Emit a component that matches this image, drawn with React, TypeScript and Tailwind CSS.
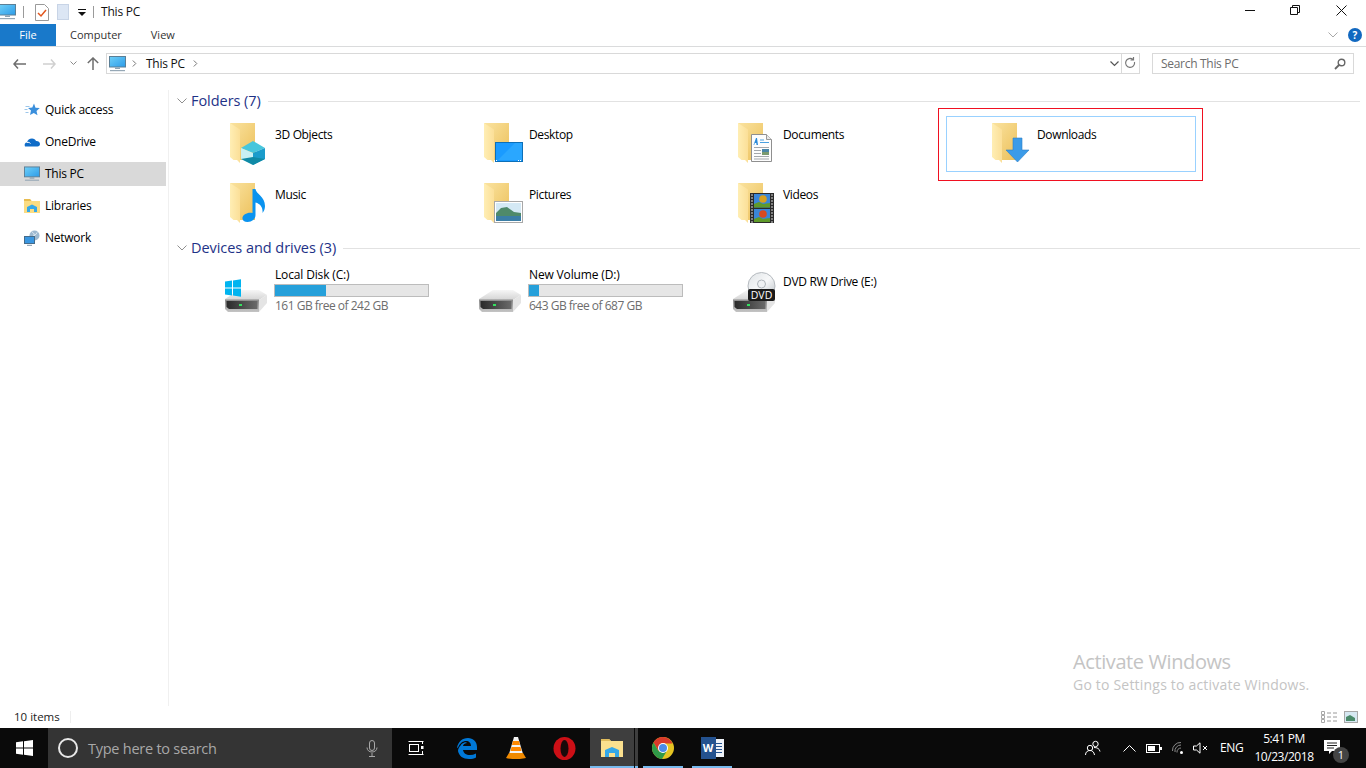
import type { ReactNode } from "react";

const FONT = "font-['Open_Sans','Noto_Sans',sans-serif]";

function Defs() {
  return (
    <svg width="0" height="0" className="absolute">
      <defs>
        <linearGradient id="fold" x1="0" y1="0" x2="1" y2="1">
          <stop offset="0" stopColor="#fae3a0" />
          <stop offset="1" stopColor="#ecc05a" />
        </linearGradient>
        <linearGradient id="flap" x1="0" y1="0" x2="1" y2="0">
          <stop offset="0" stopColor="#ffeeb4" />
          <stop offset="1" stopColor="#fbdf98" />
        </linearGradient>
        <linearGradient id="screen" x1="0" y1="0" x2="1" y2="1">
          <stop offset="0" stopColor="#6fd0f8" />
          <stop offset="1" stopColor="#2c9be8" />
        </linearGradient>
        <linearGradient id="hdd" x1="0" y1="0" x2="0" y2="1">
          <stop offset="0" stopColor="#f6f6f6" />
          <stop offset="1" stopColor="#d4d4d4" />
        </linearGradient>
        <linearGradient id="front" x1="0" y1="0" x2="0" y2="1">
          <stop offset="0" stopColor="#8c8c8c" />
          <stop offset="1" stopColor="#c4c4c4" />
        </linearGradient>
        <linearGradient id="slot" x1="0" y1="0" x2="1" y2="0">
          <stop offset="0" stopColor="#2a2a2a" />
          <stop offset="1" stopColor="#6a6a6a" />
        </linearGradient>
        <linearGradient id="disc" x1="0" y1="0" x2="1" y2="1">
          <stop offset="0" stopColor="#dfe3e6" />
          <stop offset="0.5" stopColor="#f7f8f9" />
          <stop offset="1" stopColor="#b8bec4" />
        </linearGradient>
      </defs>
    </svg>
  );
}

function FolderBase() {
  return (
    <>
      <path d="M3 3h25v37H13z" fill="url(#fold)" />
      <path d="M3 3l10 6.500V43l-3-3H6.500L3 37z" fill="url(#flap)" />
    </>
  );
}

function Tile48({ children }: { children: ReactNode }) {
  return (
    <svg width="48" height="48" viewBox="0 0 48 48" className="shrink-0">
      {children}
    </svg>
  );
}

function ObjectsIcon() {
  return (
    <Tile48>
      <FolderBase />
      <path d="M14 28l12-7 12 7-12 5z" fill="#47c6dc" />
      <path d="M14 28l12 5v12l-12-6z" fill="#c8f0f4" />
      <path d="M38 28l-12 5v12l12-6z" fill="#1a9ccb" />
      <path d="M14 39l12-2 12 2-12 6z" fill="#0f8aa6" />
    </Tile48>
  );
}

function DesktopFolderIcon() {
  return (
    <Tile48>
      <FolderBase />
      <rect x="14.500" y="22.500" width="27" height="19" fill="#1a9bff" stroke="#0c6fb8" />
      <path d="M17 40L34 23h7v17z" fill="#2aa7ff" />
      <rect x="15" y="40" width="1" height="1" fill="#fff" />
      <rect x="37" y="40" width="1" height="1" fill="#fff" />
      <rect x="39" y="40" width="1" height="1" fill="#fff" />
    </Tile48>
  );
}

function DocumentsIcon() {
  return (
    <Tile48>
      <FolderBase />
      <path d="M16.500 14.500h15l5 5v22h-20z" fill="#fdfdfd" stroke="#8f8f8f" />
      <path d="M31.500 14.500v5h5" fill="#e8e8e8" stroke="#9a9a9a" />
      <path d="M18.500 25l2.500-7h1l1 7H21.500l-.2-2h-1.500l-.6 2z" fill="#2a8ad8" />
      <path d="M25 20h4M25 22.500h9" stroke="#4aa0e0" />
      <path d="M19 27.500h15M19 30.500h7M19 33.500h7M19 36.500h15M19 39h15" stroke="#a4a8ac" />
      <rect x="27" y="29" width="7" height="6" fill="#4a86a8" />
      <rect x="27" y="32" width="7" height="3" fill="#7a9a70" />
    </Tile48>
  );
}

function MusicIcon() {
  return (
    <Tile48>
      <FolderBase />
      <path d="M25.500 9h3c.5 5 9.500 7.500 9.500 17 0 3-1 5-2.500 7 .5-5-1.500-9-7-10.500V35c0 4-3.500 7-8 7-3.500 0-5.500-2-5-4.500s4.500-5.500 10-4.500z" fill="#0a93ef" />
    </Tile48>
  );
}

function PicturesIcon() {
  return (
    <Tile48>
      <FolderBase />
      <rect x="13.500" y="21.500" width="28" height="21" fill="#fff" stroke="#a8a8a8" />
      <rect x="15" y="23" width="25" height="18" fill="#d4e9f5" />
      <path d="M15 33l5-5 6-1 7 5 7 1v4H15z" fill="#4f8a6a" />
      <path d="M15 36h25v5H15z" fill="#3b7ea6" />
    </Tile48>
  );
}

function VideosIcon() {
  return (
    <Tile48>
      <FolderBase />
      <rect x="15" y="13" width="24" height="30" fill="#2b2b2b" />
      <rect x="19" y="14" width="16" height="13.500" fill="#3a86d8" />
      <rect x="19" y="29" width="16" height="13" fill="#3a86d8" />
      <path d="M19 24l5-2 4 2 7-1v4.500H19zM19 39l5-2 4 2 7-1v4H19z" fill="#5f9a2a" />
      <circle cx="28" cy="19" r="3.800" fill="#d8a020" />
      <circle cx="28" cy="34" r="3.800" fill="#d84a20" />
      <path d="M16 15h2M16 18h2M16 21h2M16 24h2M16 27h2M16 30h2M16 33h2M16 36h2M16 39h2M16 42h2M36 15h2M36 18h2M36 21h2M36 24h2M36 27h2M36 30h2M36 33h2M36 36h2M36 39h2M36 42h2" stroke="#d8d8d8" />
    </Tile48>
  );
}

function DownloadsIcon() {
  return (
    <Tile48>
      <FolderBase />
      <path d="M24 18h9v12h7L28.500 42 17 30h7z" fill="#3b9be8" stroke="#2b7fc8" strokeWidth=".6" />
    </Tile48>
  );
}

function HddBody() {
  return (
    <>
      <path d="M3 29l14-9h20l8 5-8 5H3z" fill="url(#hdd)" />
      <path d="M3 29.500h34V42H6l-3-3z" fill="url(#front)" />
      <path d="M4.500 31h31v8H7l-2.500-2z" fill="url(#slot)" />
      <path d="M37 30l8-5v8l-8 9z" fill="#e4e4e4" />
      <rect x="17" y="34" width="3" height="2" fill="#35e060" />
    </>
  );
}

function CDriveIcon() {
  return (
    <svg width="48" height="48" viewBox="0 0 48 48" className="shrink-0">
      <HddBody />
      <path d="M3 11.500l7-1v7H3zM11 10.500l8-1.200V17.500h-8zM3 18.500h7v7l-7-1zM11 18.500h8v8.200l-8-1.200z" fill="#00b4f0" />
    </svg>
  );
}

function DDriveIcon() {
  return (
    <svg width="48" height="48" viewBox="0 0 48 48" className="shrink-0">
      <HddBody />
    </svg>
  );
}

function DvdIcon() {
  return (
    <svg width="48" height="48" viewBox="0 0 48 48" className="shrink-0">
      <HddBody />
      <circle cx="31.500" cy="16" r="13.500" fill="url(#disc)" stroke="#b5babf" />
      <circle cx="31.500" cy="14" r="4" fill="#eef0f2" stroke="#aeb4ba" />
      <rect x="18" y="19" width="27" height="12" rx="2" fill="#1a1a1a" />
      <text x="31.500" y="29" textAnchor="middle" fill="#fff" fontSize="10.500" fontFamily="Open Sans, sans-serif">
        DVD
      </text>
    </svg>
  );
}

function PcIcon({ className }: { className?: string }) {
  return (
    <svg width="17" height="16" viewBox="0 0 17 16" className={className}>
      <rect x=".5" y=".5" width="16" height="10.500" fill="url(#screen)" stroke="#5b7f96" />
      <path d="M6 11.500h5v1.500H6z" fill="#8da3b3" />
      <path d="M1 14h15v1.200H1z" fill="#96a8b6" />
    </svg>
  );
}

function Sidebar() {
  const rows: [string, ReactNode][] = [
    [
      "Quick access",
      <svg width="16" height="16" viewBox="0 0 16 16">
        <path d="M10 1.500l1.500 4.200 4.300.4-3.300 2.800 1 4.400-3.700-2.400L6 13l1-4.400L4 6l4.300-.4z" fill="#3a8fdc" />
        <path d="M1.500 4.500h4M.5 7.500h3M1.500 10.500h3" stroke="#9cc6ea" />
      </svg>,
    ],
    [
      "OneDrive",
      <svg width="16" height="16" viewBox="0 0 16 16">
        <path d="M1 12.500c-1-2 0-4 2-4 .5-2.500 2.500-4 5-4 2 0 3.500 1 4 2.500 2-.2 4 1 4 3 0 1.500-1 2.500-2.500 2.500z" fill="#0f6cc8" />
        <path d="M3 8.500c1.500-.5 2.500 0 3.500 1" stroke="#fff" fill="none" />
      </svg>,
    ],
    ["This PC", <PcIcon />],
    [
      "Libraries",
      <svg width="16" height="16" viewBox="0 0 16 16">
        <path d="M0 1h6l1.500 2H16v12H0z" fill="#fbdc82" />
        <path d="M0 1h6l1.500 2H0z" fill="#e8bc50" />
        <path d="M3 9l5-2.500L13 9v5h-3v-3H6v3H3z" fill="#35a8e8" />
      </svg>,
    ],
    [
      "Network",
      <svg width="16" height="16" viewBox="0 0 16 16">
        <circle cx="10.500" cy="5.500" r="5" fill="#9cb8d0" />
        <path d="M8 2c2 1 3 3 1.500 5M13 2.500c-1 2-2 3-3.500 3" stroke="#e8f0f6" fill="none" />
        <rect x=".5" y="6.500" width="10" height="7" fill="#3a96e0" stroke="#456b8a" />
        <path d="M3 15.300h5" stroke="#7f95a8" />
      </svg>,
    ],
  ];
  return (
    <nav className="w-[169px] shrink-0 border-r border-[#f0f0f0] pt-[8px] pb-[2px] flex flex-col gap-[8px]">
      {rows.map(([label, icon]) => (
        <div
          key={label}
          className={`w-[166px] h-[24px] flex items-center pl-[24px] gap-[5px] text-[12px] tracking-[-0.25px] text-black ${
            label === "This PC" ? "bg-[#d9d9d9]" : ""
          }`}
        >
          <span className="w-[16px] h-[16px] flex items-center justify-center">{icon}</span>
          <span>{label}</span>
        </div>
      ))}
    </nav>
  );
}

function SectionHead({ title }: { title: string }) {
  return (
    <div className="h-[22px] flex items-center pl-[8px] pr-[6px]">
      <svg width="10" height="6" viewBox="0 0 10 6" className="shrink-0">
        <path d="M.5.500L5 5l4.500-4.500" fill="none" stroke="#8f8f8f" />
      </svg>
      <span className="ml-[4px] text-[14.500px] text-[#1e3287] tracking-[-0.05px] whitespace-nowrap">{title}</span>
      <div className="ml-[7px] flex-1 h-px bg-[#e2e2e2]" />
    </div>
  );
}

function FolderTile({ name, icon, selected }: { name: string; icon: ReactNode; selected?: boolean }) {
  return (
    <div
      className={`relative w-[250px] h-[56px] border flex pl-[42px] pt-[3px] ${
        selected ? "border-[#99d1ff]" : "border-transparent"
      }`}
    >
      {icon}
      <span className="text-[12px] tracking-[-0.35px] text-black pt-[7px] leading-[16px]">{name}</span>
      {selected && <div className="absolute left-[-9px] top-[-9px] w-[265px] h-[73px] border border-[#f01020]" />}
    </div>
  );
}

function DriveTile({
  name,
  icon,
  used,
  free,
}: {
  name: string;
  icon: ReactNode;
  used?: number;
  free?: string;
}) {
  return (
    <div className="w-[250px] h-[56px] flex pl-[38px] pt-[8px]">
      {icon}
      {free ? (
        <div className="ml-[4px] w-[155px] -mt-[8px] pt-[5px]">
          <div className="pl-px text-[12px] leading-[16px] tracking-[-0.15px] text-black">{name}</div>
          <div className="h-[13px] mt-[1px] border border-[#bcbcbc] bg-[#e6e6e6]">
            <div className="h-full bg-[#26a0da]" style={{ width: `${used}%` }} />
          </div>
          <div className="pl-px mt-[1px] text-[12px] leading-[16px] tracking-[-0.5px] text-[#6d6d6d]">{free}</div>
        </div>
      ) : (
        <span className="ml-[5px] text-[12px] leading-[16px] tracking-[-0.3px] text-black pt-[4px]">{name}</span>
      )}
    </div>
  );
}

function TitleBar() {
  return (
    <div className="h-[24px] flex items-center">
      <PcIcon className="ml-[-1px]" />
      <div className="ml-[7px] w-px h-[12px] bg-[#9a9a9a]" />
      <svg width="14" height="17" viewBox="0 0 14 17" className="ml-[11px]">
        <path d="M.5.500h9l4 4v12H.5z" fill="#fff" stroke="#9a9a9a" />
        <path d="M3 9l3 3 5-6" fill="none" stroke="#e2561d" strokeWidth="1.500" />
      </svg>
      <div className="ml-[8px] w-[12px] h-[16px] bg-[#dce6f4] border border-[#c8d4e6]" />
      <svg width="8" height="7" viewBox="0 0 8 7" className="ml-[9px]">
        <path d="M0 0h8v1H0zM0 3h8L4 7z" fill="#111" />
      </svg>
      <div className="ml-[7px] w-px h-[12px] bg-[#9a9a9a]" />
      <span className="ml-[7px] text-[12px] tracking-[-0.2px] text-[#111]">This PC</span>
      <div className="ml-auto flex items-center">
        <svg width="10" height="10" viewBox="0 0 10 10" className="mr-[35px] mt-[-4px]">
          <path d="M0 5.500h10" stroke="#111" />
        </svg>
        <svg width="10" height="10" viewBox="0 0 10 10" className="mr-[36px] mt-[-4px]">
          <path d="M.5 2.500h7v7h-7zM2.500 2.500v-2h7v7h-2" fill="none" stroke="#111" />
        </svg>
        <svg width="11" height="11" viewBox="0 0 11 11" className="mr-[19px] mt-[-4px]">
          <path d="M.5.500l10 10M10.500.500l-10 10" stroke="#111" />
        </svg>
      </div>
    </div>
  );
}

function RibbonTabs() {
  return (
    <div className="h-[23px] border-b border-[#dadbdc] flex items-stretch text-[11px]">
      <div className="w-[56px] bg-[#1979ca] text-white flex items-center justify-center">File</div>
      <span className="ml-[14px] self-center text-[#333]">Computer</span>
      <span className="ml-[29px] self-center text-[#333]">View</span>
      <div className="ml-auto flex items-center">
        <svg width="10" height="6" viewBox="0 0 10 6" className="mr-[10px]">
          <path d="M.5.500L5 5l4.500-4.500" fill="none" stroke="#a8a8a8" />
        </svg>
        <div className="mr-[4px] w-[14px] h-[14px] rounded-full bg-[#1168c0] text-white text-[10px] font-bold leading-[14px] text-center">
          ?
        </div>
      </div>
    </div>
  );
}

function AddressRow() {
  return (
    <div className="h-[33px] flex items-center">
      <svg width="13" height="10" viewBox="0 0 13 10" className="ml-[13px]">
        <path d="M5 .500L1 5l4 4.500M1 5h12" fill="none" stroke="#6e6e6e" strokeWidth="1.500" />
      </svg>
      <svg width="13" height="10" viewBox="0 0 13 10" className="ml-[17px]">
        <path d="M8 .500L12 5 8 9.500M12 5H0" fill="none" stroke="#d0d0d0" strokeWidth="1.500" />
      </svg>
      <svg width="7" height="5" viewBox="0 0 7 5" className="ml-[14px]">
        <path d="M.500.500l3 3 3-3" fill="none" stroke="#8a8a8a" />
      </svg>
      <svg width="12" height="13" viewBox="0 0 12 13" className="ml-[10px]">
        <path d="M.8 6L6 1l5.200 5M6 1v12" fill="none" stroke="#6e6e6e" strokeWidth="1.500" />
      </svg>
      <div className="ml-[7px] w-[1034px] h-[21px] border border-[#d9d9d9] flex items-center text-[12px] tracking-[-0.25px] text-[#111]">
        <PcIcon className="ml-[2px]" />
        <svg width="5" height="7" viewBox="0 0 5 7" className="ml-[6px]">
          <path d="M.8.500l3 3-3 3" fill="none" stroke="#777" />
        </svg>
        <span className="ml-[9px]">This PC</span>
        <svg width="5" height="7" viewBox="0 0 5 7" className="ml-[8px]">
          <path d="M.8.500l3 3-3 3" fill="none" stroke="#777" />
        </svg>
        <svg width="9" height="6" viewBox="0 0 9 6" className="ml-auto mr-[1px]">
          <path d="M.5.500l4 4 4-4" fill="none" stroke="#555" strokeWidth="1.200" />
        </svg>
        <div className="ml-[1px] w-px h-full bg-[#d9d9d9]" />
        <svg width="13" height="13" viewBox="0 0 13 13" className="mx-[2px]">
          <path d="M10.500 5a4.500 4.500 0 1 1-1.500-2.500M9.500 0v3h-3" fill="none" stroke="#777" strokeWidth="1.200" />
        </svg>
      </div>
      <div className="ml-[12px] w-[202px] h-[21px] border border-[#d9d9d9] flex items-center pl-[8px] text-[12px] tracking-[-0.3px] text-[#6d6d6d]">
        <span>Search This PC</span>
        <svg width="12" height="12" viewBox="0 0 12 12" className="ml-auto mr-[7px]">
          <circle cx="7.500" cy="4.500" r="3.300" fill="none" stroke="#666" strokeWidth="1.400" />
          <path d="M5 7l-4 4" stroke="#666" strokeWidth="1.800" />
        </svg>
      </div>
    </div>
  );
}

function StatusBar() {
  return (
    <div className="h-[22px] flex items-center text-[11.500px] text-[#222]">
      <span className="ml-[14px]">10 items</span>
      <div className="ml-[10px] w-px h-[12px] bg-[#eeeeee]" />
      <svg width="17" height="12" viewBox="0 0 17 12" className="ml-auto">
        <path d="M.5.500h3v3h-3zM.5 4.500h3v3h-3zM.5 8.500h3v3h-3z" fill="none" stroke="#a8a8a8" />
        <path d="M6 2h4M12 2h4M6 6h4M12 6h4M6 10h4M12 10h4" stroke="#9a9a9a" />
      </svg>
      <svg width="14" height="12" viewBox="0 0 14 12" className="ml-[6px] mr-[8px]">
        <rect x=".5" y=".5" width="13" height="11" fill="#d6e8f2" stroke="#a8a8a8" />
        <path d="M2 6l4-2 5 3v3H2z" fill="#4a8a6a" />
      </svg>
    </div>
  );
}

function TaskSlot({
  w,
  children,
  active,
  underline,
}: {
  w: string;
  children?: ReactNode;
  active?: boolean;
  underline?: boolean;
}) {
  return (
    <div className={`${w} h-full relative flex items-center justify-center ${active ? "bg-[#3e3e3e]" : ""}`}>
      {children}
      {underline && <div className="absolute left-0 right-0 bottom-0 h-[2px] bg-[#76b9ed]" />}
    </div>
  );
}

function Taskbar() {
  return (
    <div className="h-[40px] bg-[#0a0a0a] flex items-stretch">
      <div className="w-[48px] flex items-center justify-center">
        <svg width="17" height="16" viewBox="0 0 17 16">
          <path d="M0 2.300l7-1v6.200H0zM8 1.200L17 0v7.500H8zM0 8.500h7v6.200l-7-1zM8 8.500h9V16l-9-1.200z" fill="#fff" />
        </svg>
      </div>
      <div className="w-[344px] bg-[#343434] flex items-center pl-[10px]">
        <div className="w-[20px] h-[20px] rounded-full border-[2.500px] border-[#e8e8e8]" />
        <span className="ml-[10px] pt-px text-[14.500px] text-[#a8a8a8] tracking-[-0.25px]">Type here to search</span>
        <svg width="12" height="17" viewBox="0 0 12 17" className="ml-auto mr-[14px]">
          <rect x="3.500" y=".5" width="5" height="10" rx="2.500" fill="none" stroke="#a8a8a8" />
          <path d="M1 7.500c0 6 10 6 10 0M6 13v3M3 16.500h6" fill="none" stroke="#a8a8a8" />
        </svg>
      </div>
      <TaskSlot w="w-[48px]">
        <svg width="16" height="14" viewBox="0 0 16 14">
          <path d="M.5.500h15M.5 13.500h15" stroke="#fff" />
          <rect x="1.500" y="3.500" width="9" height="7" fill="none" stroke="#fff" />
          <rect x="13" y="5" width="2.500" height="3" fill="#fff" />
          <path d="M14.500 0v3M14.500 10v4" stroke="#fff" />
        </svg>
      </TaskSlot>
      <TaskSlot w="w-[54px]">
        <svg width="20" height="21" viewBox="0 0 20 21">
          <path d="M0 10C1 4 5 0 11 0c5 0 9 3.500 9 9v3H6c.5 3 3 5 7 5 2 0 4-.5 6-1.500v4c-2 1-4 1.500-7 1.500-6 0-10-3-11-8 0-2 1-4 3-6 0-1 5-4 6-2-3 .5-4 2-4 3h8c0-3-2-5-5-5-3 0-6 2-8 6.500z" fill="#0078d7" />
        </svg>
      </TaskSlot>
      <TaskSlot w="w-[44px]">
        <svg width="20" height="22" viewBox="0 0 20 22">
          <path d="M8 0h4l5 17H3z" fill="#f3f3f3" />
          <path d="M7 4h6l1 4H6zM5.500 10h9l1 4H4.500z" fill="#ff8800" />
          <path d="M3 16h14l3 5c-5 1.500-15 1.500-20 0z" fill="#f08a00" />
        </svg>
      </TaskSlot>
      <TaskSlot w="w-[52px]">
        <svg width="23" height="23" viewBox="0 0 23 23">
          <ellipse cx="11.500" cy="11.500" rx="11" ry="11.500" fill="#cc0f16" />
          <ellipse cx="11.500" cy="11.500" rx="4" ry="8.500" fill="#1a0a0a" />
        </svg>
      </TaskSlot>
      <TaskSlot w="w-[44px]" active underline>
        <svg width="22" height="18" viewBox="0 0 22 18">
          <path d="M0 0h8l2 2h12v16H0z" fill="#fbe08e" />
          <path d="M0 0h8l2 2H0z" fill="#e0bc5c" />
          <path d="M4 11l7-3 7 3v7h-4v-4H8v4H4z" fill="#35a8e8" />
        </svg>
      </TaskSlot>
      <div className="w-px" />
      <TaskSlot w="w-[3px]" active underline />
      <div className="w-[5px]" />
      <TaskSlot w="w-[40px]" underline>
        <svg width="22" height="22" viewBox="0 0 22 22">
          <circle cx="11" cy="11" r="11" fill="#e5c422" />
          <path d="M11 0a11 11 0 0 0-9.500 5.500L6.500 14 11 6.500h9.500A11 11 0 0 0 11 0z" fill="#d93a2b" />
          <path d="M1.500 5.500A11 11 0 0 0 10 22l4.500-7.500L6.500 14z" fill="#2f9a48" />
          <circle cx="11" cy="11" r="5" fill="#fff" />
          <circle cx="11" cy="11" r="4" fill="#4a8be8" />
        </svg>
      </TaskSlot>
      <div className="w-[9px]" />
      <TaskSlot w="w-[40px]" underline>
        <div className="relative w-[23px] h-[22px]">
          <div className="absolute right-0 top-[2px] w-[16px] h-[18px] bg-[#eef2f8] flex flex-col justify-center gap-[2px] pl-[8px] pr-[2px]">
            <div className="h-px bg-[#24528f]" />
            <div className="h-px bg-[#24528f]" />
            <div className="h-px bg-[#24528f]" />
            <div className="h-px bg-[#24528f]" />
          </div>
          <div className="absolute left-0 top-0 w-[15px] h-[22px] bg-[#24528f] text-white text-[11px] font-bold leading-[22px] text-center">
            W
          </div>
        </div>
      </TaskSlot>
      <div className="ml-auto flex items-center text-white">
        <svg width="16" height="16" viewBox="0 0 16 16">
          <circle cx="10.500" cy="4" r="2.700" fill="none" stroke="#fff" />
          <circle cx="5" cy="8" r="2.700" fill="none" stroke="#fff" />
          <path d="M.5 15c0-3 2-4.500 4.500-4.500S9 12 9.500 15M9 7.500c3 0 5.500 1 6 4" fill="none" stroke="#fff" />
        </svg>
        <svg width="13" height="7" viewBox="0 0 13 7" className="ml-[22px]">
          <path d="M.5 6.500l6-6 6 6" fill="none" stroke="#fff" />
        </svg>
        <svg width="16" height="9" viewBox="0 0 16 9" className="ml-[10px]">
          <rect x=".5" y=".5" width="13" height="8" fill="none" stroke="#fff" />
          <rect x="2" y="2" width="7" height="5" fill="#fff" />
          <rect x="14" y="3" width="2" height="3" fill="#fff" />
        </svg>
        <svg width="13" height="13" viewBox="0 0 13 13" className="ml-[10px]">
          <path d="M.5 9A8 8 0 0 1 9 .5M3 10a6 6 0 0 1 6-7M5 10.500A4 4 0 0 1 9 6" fill="none" stroke="#8a8a8a" />
          <circle cx="9.500" cy="10.500" r="1.500" fill="#fff" />
        </svg>
        <svg width="16" height="12" viewBox="0 0 16 12" className="ml-[8px]">
          <path d="M.5 4h3L7 .8v10.400L3.500 8h-3zM10 4l4 4M14 4l-4 4" fill="none" stroke="#fff" />
        </svg>
        <span className="ml-[11px] w-[24px] text-[12px] tracking-[-0.3px]">ENG</span>
        <div className="ml-[10px] w-[60px] text-center text-[12px] leading-[18px] tracking-[-0.45px]">
          <div>5:41 PM</div>
          <div>10/23/2018</div>
        </div>
        <div className="relative ml-[2px] w-[50px] h-full">
          <svg width="16" height="15" viewBox="0 0 16 15" className="absolute left-[8px] top-[12px]">
            <path d="M0 0h16v11H8l-3 3v-3H0z" fill="#fff" />
            <path d="M3 3h10M3 5.500h10M3 8h7" stroke="#222" />
          </svg>
          <div className="absolute left-[17px] top-[19px] w-[16px] h-[16px] rounded-full bg-[#444] text-white text-[11px] leading-[16px] text-center">
            1
          </div>
        </div>
      </div>
    </div>
  );
}

export default function App() {
  return (
    <div className={`relative w-[1366px] h-[768px] bg-white overflow-hidden flex flex-col ${FONT}`}>
      <Defs />
      <TitleBar />
      <RibbonTabs />
      <AddressRow />
      <div className="flex-1 flex min-h-0 pt-[10px]">
        <Sidebar />
        <main className="flex-1 min-w-0">
          <SectionHead title="Folders (7)" />
          <div className="grid grid-cols-[repeat(4,250px)] auto-rows-[56px] gap-[4px] pl-[15px] pt-[4px]">
            <FolderTile name="3D Objects" icon={<ObjectsIcon />} />
            <FolderTile name="Desktop" icon={<DesktopFolderIcon />} />
            <FolderTile name="Documents" icon={<DocumentsIcon />} />
            <FolderTile name="Downloads" icon={<DownloadsIcon />} selected />
            <FolderTile name="Music" icon={<MusicIcon />} />
            <FolderTile name="Pictures" icon={<PicturesIcon />} />
            <FolderTile name="Videos" icon={<VideosIcon />} />
          </div>
          <div className="mt-[5px]">
            <SectionHead title="Devices and drives (3)" />
          </div>
          <div className="flex gap-[4px] pl-[15px] pt-[3px]">
            <DriveTile name="Local Disk (C:)" icon={<CDriveIcon />} used={33.500} free="161 GB free of 242 GB" />
            <DriveTile name="New Volume (D:)" icon={<DDriveIcon />} used={6.500} free="643 GB free of 687 GB" />
            <DriveTile name="DVD RW Drive (E:)" icon={<DvdIcon />} />
          </div>
        </main>
      </div>
      <StatusBar />
      <Taskbar />
      <div className="absolute left-[1073px] top-[650px] text-[#c4c4c4] pointer-events-none">
        <div className="text-[20px] leading-[24px] tracking-[-0.4px]">Activate Windows</div>
        <div className="text-[14px] leading-[20px] mt-[1px] tracking-[0.2px]">Go to Settings to activate Windows.</div>
      </div>
    </div>
  );
}
